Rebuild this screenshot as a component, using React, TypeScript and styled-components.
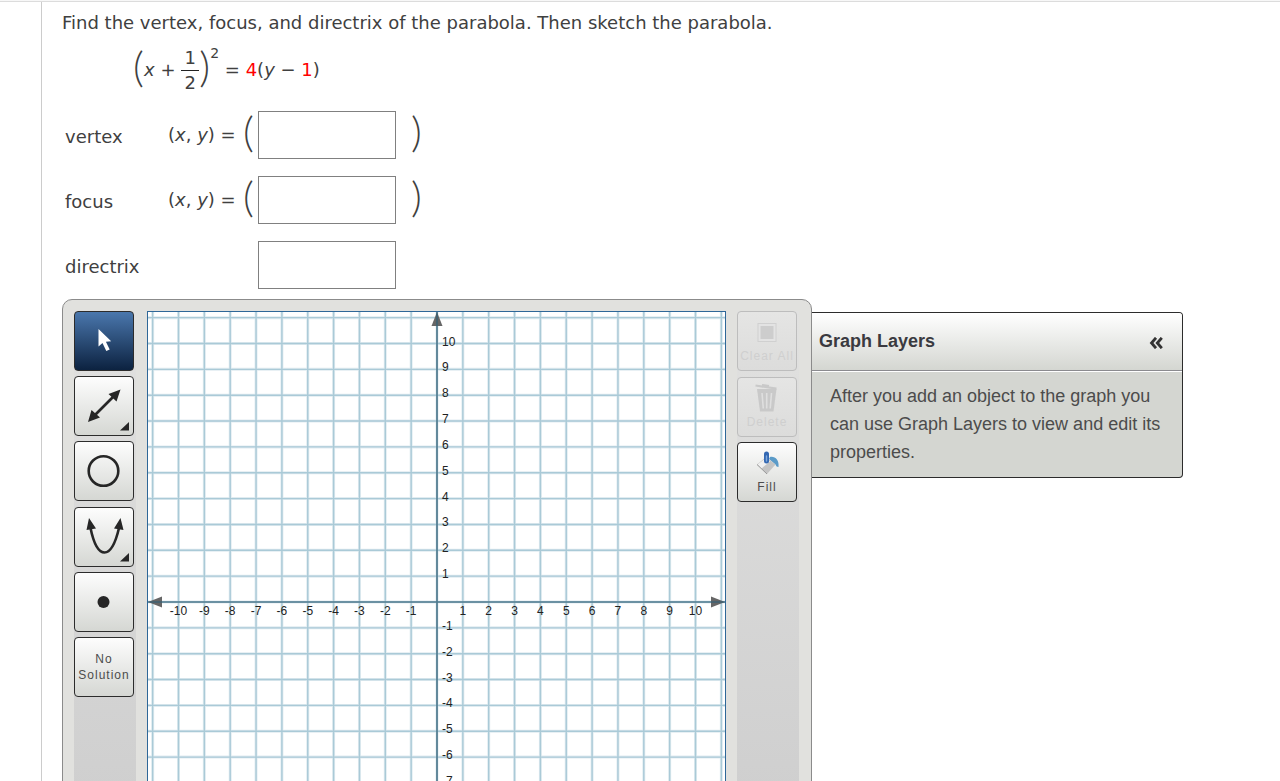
import React from "react";
import styled, { createGlobalStyle, css } from "styled-components";

const GlobalStyle = createGlobalStyle`
  *, *::before, *::after { box-sizing: border-box; }
  body {
    margin: 0;
    background: #fff;
    color: #404040;
    font-family: Verdana, "DejaVu Sans", sans-serif;
    font-size: 18px;
    line-height: 24px;
  }
`;

const Page = styled.div`
  height: 100vh;
  overflow: hidden;
  border-top: 1px solid #f7f7f7;
`;

const Frame = styled.div`
  min-height: 100%;
  border-top: 1px solid #dcdcdc;
  display: flex;
  padding-left: 41px;
`;

const Question = styled.main`
  flex: 1;
  min-width: 0;
  border-left: 1px solid #ccc;
  padding: 9px 20px 0;
`;

const Prompt = styled.p`
  margin: 0;
`;

const Equation = styled.div`
  display: flex;
  align-items: center;
  height: 48px;
  margin: 11px 0 17px 71px;
  white-space: pre;
`;

const Delimiter = styled.span`
  font-family: Lato, "Liberation Sans", sans-serif;
  font-weight: 300;
  font-size: 42px;
  line-height: 40px;
  width: 11px;
  height: 48px;
  display: inline-flex;
  justify-content: center;
`;

const Fraction = styled.span`
  display: inline-flex;
  flex-direction: column;
  align-items: center;
  width: 18px;
`;

const Numerator = styled.span`
  width: 100%;
  text-align: center;
  border-bottom: 1px solid #222;
`;

const Denominator = styled.span``;

const Exponent = styled.span`
  font-size: 14px;
  align-self: flex-start;
  line-height: 14px;
`;

const Red = styled.span`
  color: #f00;
`;

const Answers = styled.form`
  display: grid;
  row-gap: 17px;
  margin: 0 0 10px 3px;
`;

const AnswerRow = styled.div`
  display: grid;
  grid-template-columns: 103px 75px 15px 138px 26px;
  align-items: center;
  height: 48px;
`;

const AnswerLabel = styled.label`
  padding-top: 4px;
`;

const Variables = styled.span`
  white-space: nowrap;
`;

const AnswerInput = styled.input`
  grid-column: 4;
  width: 100%;
  height: 48px;
  border: 1px solid #808080;
  border-radius: 0;
  padding: 0 8px;
  font: inherit;
  background: #fff;
`;

const ClosingCell = styled.span`
  display: flex;
  justify-content: flex-end;
`;

const Grapher = styled.section`
  display: flex;
  align-items: flex-start;
`;

const Workspace = styled.div`
  flex: none;
  display: flex;
  gap: 11px;
  padding: 11px 12px 11px 11px;
  border: 1px solid #8b8b8b;
  border-radius: 10px;
  background: #e1e1de;
`;

const Rail = styled.div`
  width: 62px;
  background: linear-gradient(#e1e1e0, #cfcfcf 480px);
`;

const RailGroup = styled.div<{ $height: number }>`
  display: flex;
  flex-direction: column;
  justify-content: space-between;
  height: ${(p) => p.$height}px;
`;

const ToolButton = styled.button<{ $active?: boolean }>`
  display: flex;
  flex-direction: column;
  align-items: center;
  justify-content: center;
  width: 60px;
  height: 60px;
  padding: 0;
  border: 1px solid #2c2c2c;
  border-radius: 4px;
  background: linear-gradient(#fdfdfd, #d5d7d3);
  color: #4c4c4c;
  font-family: "Liberation Sans", Arial, sans-serif;
  font-size: 12px;
  line-height: 16px;
  letter-spacing: 1px;
  ${(p) =>
    p.$active &&
    css`
      background: linear-gradient(#4a77ad, #0c2240);
    `}
  &:disabled {
    border-color: #bdbdbd;
    background: linear-gradient(#e5e5e4, #dcdcdb);
    color: #cfcfcf;
    white-space: nowrap;
  }
`;

const ToolIcon = styled.svg`
  display: block;
  width: 58px;
  height: 58px;
`;

const ActionIcon = styled.svg`
  display: block;
  width: 28px;
  height: 30px;
`;

const Plot = styled.svg`
  display: block;
  width: 579px;
  height: 579px;
  border: 1px solid #2f6798;
  background: #fff;
  font-family: "Liberation Sans", Arial, sans-serif;
  font-size: 12px;
`;

const Layers = styled.aside`
  flex: 0 1 371px;
  min-width: 0;
  margin-top: 13px;
  border: 1px solid #2c2c2c;
  border-left: 0;
  border-radius: 0 4px 4px 0;
  background: #d4d6d1;
  font-family: "Liberation Sans", Arial, sans-serif;
  overflow: hidden;
`;

const LayersHeader = styled.header`
  display: flex;
  align-items: center;
  justify-content: space-between;
  height: 58px;
  padding: 0 19px 2px 7px;
  border-bottom: 1px solid #8b8b8f;
  background: linear-gradient(#fff, #d4d6d1);
`;

const LayersTitle = styled.h2`
  margin: 0;
  font-size: 18px;
  line-height: 24px;
  color: #3a3a40;
`;

const Collapse = styled.button`
  padding: 4px 0 0;
  border: 0;
  background: none;
  line-height: 0;
`;

const LayersText = styled.p`
  margin: 0;
  padding: 10px 20px 11px 18px;
  border-top: 1px solid #fff;
  font-size: 18px;
  line-height: 28px;
  color: #4c4c4c;
`;

const ORIGIN = 289;
const UNIT = 25.85;
const steps = Array.from({ length: 23 }, (_, i) => i - 11);
const labelled = steps.filter((n) => n !== 0 && Math.abs(n) <= 10);

function CoordinatePlane() {
  const at = (n: number) => ORIGIN + n * UNIT;
  const grid = steps.map((n) => `M${at(n)} 0V577M0 ${at(n) + 1}H577`).join("");
  return (
    <Plot viewBox="0 0 577 577" role="img" aria-label="Coordinate plane">
      <path d={grid} stroke="#2b7a9b" strokeOpacity={0.14} strokeWidth={3} fill="none" />
      <path d={grid} stroke="#2b7a9b" strokeOpacity={0.3} strokeWidth={1.4} fill="none" />
      <g fill="#666">
        <path d="M289 0l5.500 14h-11z" />
        <path d="M289 577l5.500-14h-11z" />
        <path d="M0 290l14-5.500v11z" />
        <path d="M577 290l-14-5.500v11z" />
      </g>
      <path d="M289 0V577M0 290H577" stroke="#315f75" strokeOpacity={0.75} strokeWidth={1.7} />
      <g fill="#222">
        {labelled.map((n) => (
          <React.Fragment key={n}>
            <text x={at(n)} y={303} textAnchor="middle">
              {n}
            </text>
            <text x={294} y={at(-n) + 3}>
              {n}
            </text>
          </React.Fragment>
        ))}
      </g>
    </Plot>
  );
}

const MenuCorner = () => <path d="M54 45v8.500h-9z" fill="#262626" />;

function PointAnswer({ id, label }: { id: string; label: string }) {
  return (
    <AnswerRow>
      <AnswerLabel htmlFor={id}>{label}</AnswerLabel>
      <Variables>
        (<i>x</i>, <i>y</i>) =
      </Variables>
      <Delimiter>(</Delimiter>
      <AnswerInput id={id} type="text" />
      <ClosingCell>
        <Delimiter>)</Delimiter>
      </ClosingCell>
    </AnswerRow>
  );
}

export default function App() {
  return (
    <Page>
      <GlobalStyle />
      <Frame>
        <Question>
          <Prompt>
            Find the vertex, focus, and directrix of the parabola. Then sketch the parabola.
          </Prompt>
          <Equation>
            <Delimiter>(</Delimiter>
            <i>x</i>
            <span> + </span>
            <Fraction>
              <Numerator>1</Numerator>
              <Denominator>2</Denominator>
            </Fraction>
            <Delimiter>)</Delimiter>
            <Exponent>2</Exponent>
            <span>
              {" = "}
              <Red>4</Red>(<i>y</i> − <Red>1</Red>)
            </span>
          </Equation>
          <Answers>
            <PointAnswer id="vertex" label="vertex" />
            <PointAnswer id="focus" label="focus" />
            <AnswerRow>
              <AnswerLabel htmlFor="directrix">directrix</AnswerLabel>
              <AnswerInput id="directrix" type="text" />
            </AnswerRow>
          </Answers>
          <Grapher>
            <Workspace>
              <Rail>
                <RailGroup $height={386}>
                  <ToolButton $active aria-label="Select">
                    <ToolIcon viewBox="0 0 58 58">
                      <path d="M23.500 17v17.500l4-3.500 3.800 8 3.400-1.600-3.800-7.600 5.300-.5z" fill="#fff" />
                    </ToolIcon>
                  </ToolButton>
                  <ToolButton aria-label="Line">
                    <ToolIcon viewBox="0 0 58 58">
                      <path d="M20 38L39 19" stroke="#262626" strokeWidth={2.6} />
                      <path d="M13 45l3.500-12 8.500 7.500zM45.500 12.500l-12 4.500 8 7.500z" fill="#262626" />
                      <MenuCorner />
                    </ToolIcon>
                  </ToolButton>
                  <ToolButton aria-label="Circle">
                    <ToolIcon viewBox="0 0 58 58">
                      <circle cx={28.5} cy={29} r={14.8} fill="none" stroke="#262626" strokeWidth={2.6} />
                    </ToolIcon>
                  </ToolButton>
                  <ToolButton aria-label="Parabola">
                    <ToolIcon viewBox="0 0 58 58">
                      <path d="M15.500 20C19 37 24 44.500 29.500 44.500S40 37 44 20" fill="none" stroke="#262626" strokeWidth={2.6} />
                      <path d="M14 10l7 10.500L11.500 22zM45.500 10l3 12-9.500-1.500z" fill="#262626" />
                      <MenuCorner />
                    </ToolIcon>
                  </ToolButton>
                  <ToolButton aria-label="Point">
                    <ToolIcon viewBox="0 0 58 58">
                      <circle cx={28.5} cy={29} r={6} fill="#262626" />
                    </ToolIcon>
                  </ToolButton>
                  <ToolButton>
                    <span>No</span>
                    <span>Solution</span>
                  </ToolButton>
                </RailGroup>
              </Rail>
              <CoordinatePlane />
              <Rail>
                <RailGroup $height={191}>
                  <ToolButton disabled>
                    <ActionIcon viewBox="0 0 28 30">
                      <rect x={5} y={5.5} width={18} height={18} fill="#e3e3e3" stroke="#d0d0d0" />
                      <rect x={7.5} y={8} width={13} height={13} fill="#cdcdcd" />
                    </ActionIcon>
                    <span>Clear All</span>
                  </ToolButton>
                  <ToolButton disabled>
                    <ActionIcon viewBox="0 0 28 30">
                      <path d="M2.500 1.500l21 3.200M9 1l7 1" stroke="#c9c9c9" strokeWidth={2.2} />
                      <path d="M4 5h19.500l-3 22.500H7z" fill="#c9c9c9" />
                      <path d="M9 9l1.300 15.500M13.700 9v15.500M18.500 9l-1.300 15.500" stroke="#dfdfdf" strokeWidth={1.6} />
                    </ActionIcon>
                    <span>Delete</span>
                  </ToolButton>
                  <ToolButton>
                    <ActionIcon viewBox="0 0 28 30">
                      <path d="M17 8c5-1 9.500 3 8.500 10-1.500 0-2.500-.8-3-2.500L16 10z" fill="#5b9bc8" />
                      <path d="M13 8l9.500 7.500-8.500 9.500L4 15.500z" fill="#c4c4c4" />
                      <path d="M13 9l4 3.500-8.500 7L4.500 15.500z" fill="#f0f0f0" />
                      <path d="M4 15.500l10 9.500" stroke="#999" />
                      <path d="M13.500 5v7" stroke="#3468b2" strokeWidth={5} strokeLinecap="round" />
                      <path d="M13.500 7v5" stroke="#7fa9dc" strokeWidth={1.4} strokeLinecap="round" />
                    </ActionIcon>
                    <span>Fill</span>
                  </ToolButton>
                </RailGroup>
              </Rail>
            </Workspace>
            <Layers>
              <LayersHeader>
                <LayersTitle>Graph Layers</LayersTitle>
                <Collapse aria-label="Collapse">
                  <svg width={14} height={12} viewBox="0 0 14 12" fill="none" stroke="#333" strokeWidth={2.8}>
                    <path d="M7 .8L2.500 6 7 11.200M12.800 .8L8.300 6l4.500 5.200" />
                  </svg>
                </Collapse>
              </LayersHeader>
              <LayersText>
                After you add an object to the graph you can use Graph Layers to view and edit its
                properties.
              </LayersText>
            </Layers>
          </Grapher>
        </Question>
      </Frame>
    </Page>
  );
}
